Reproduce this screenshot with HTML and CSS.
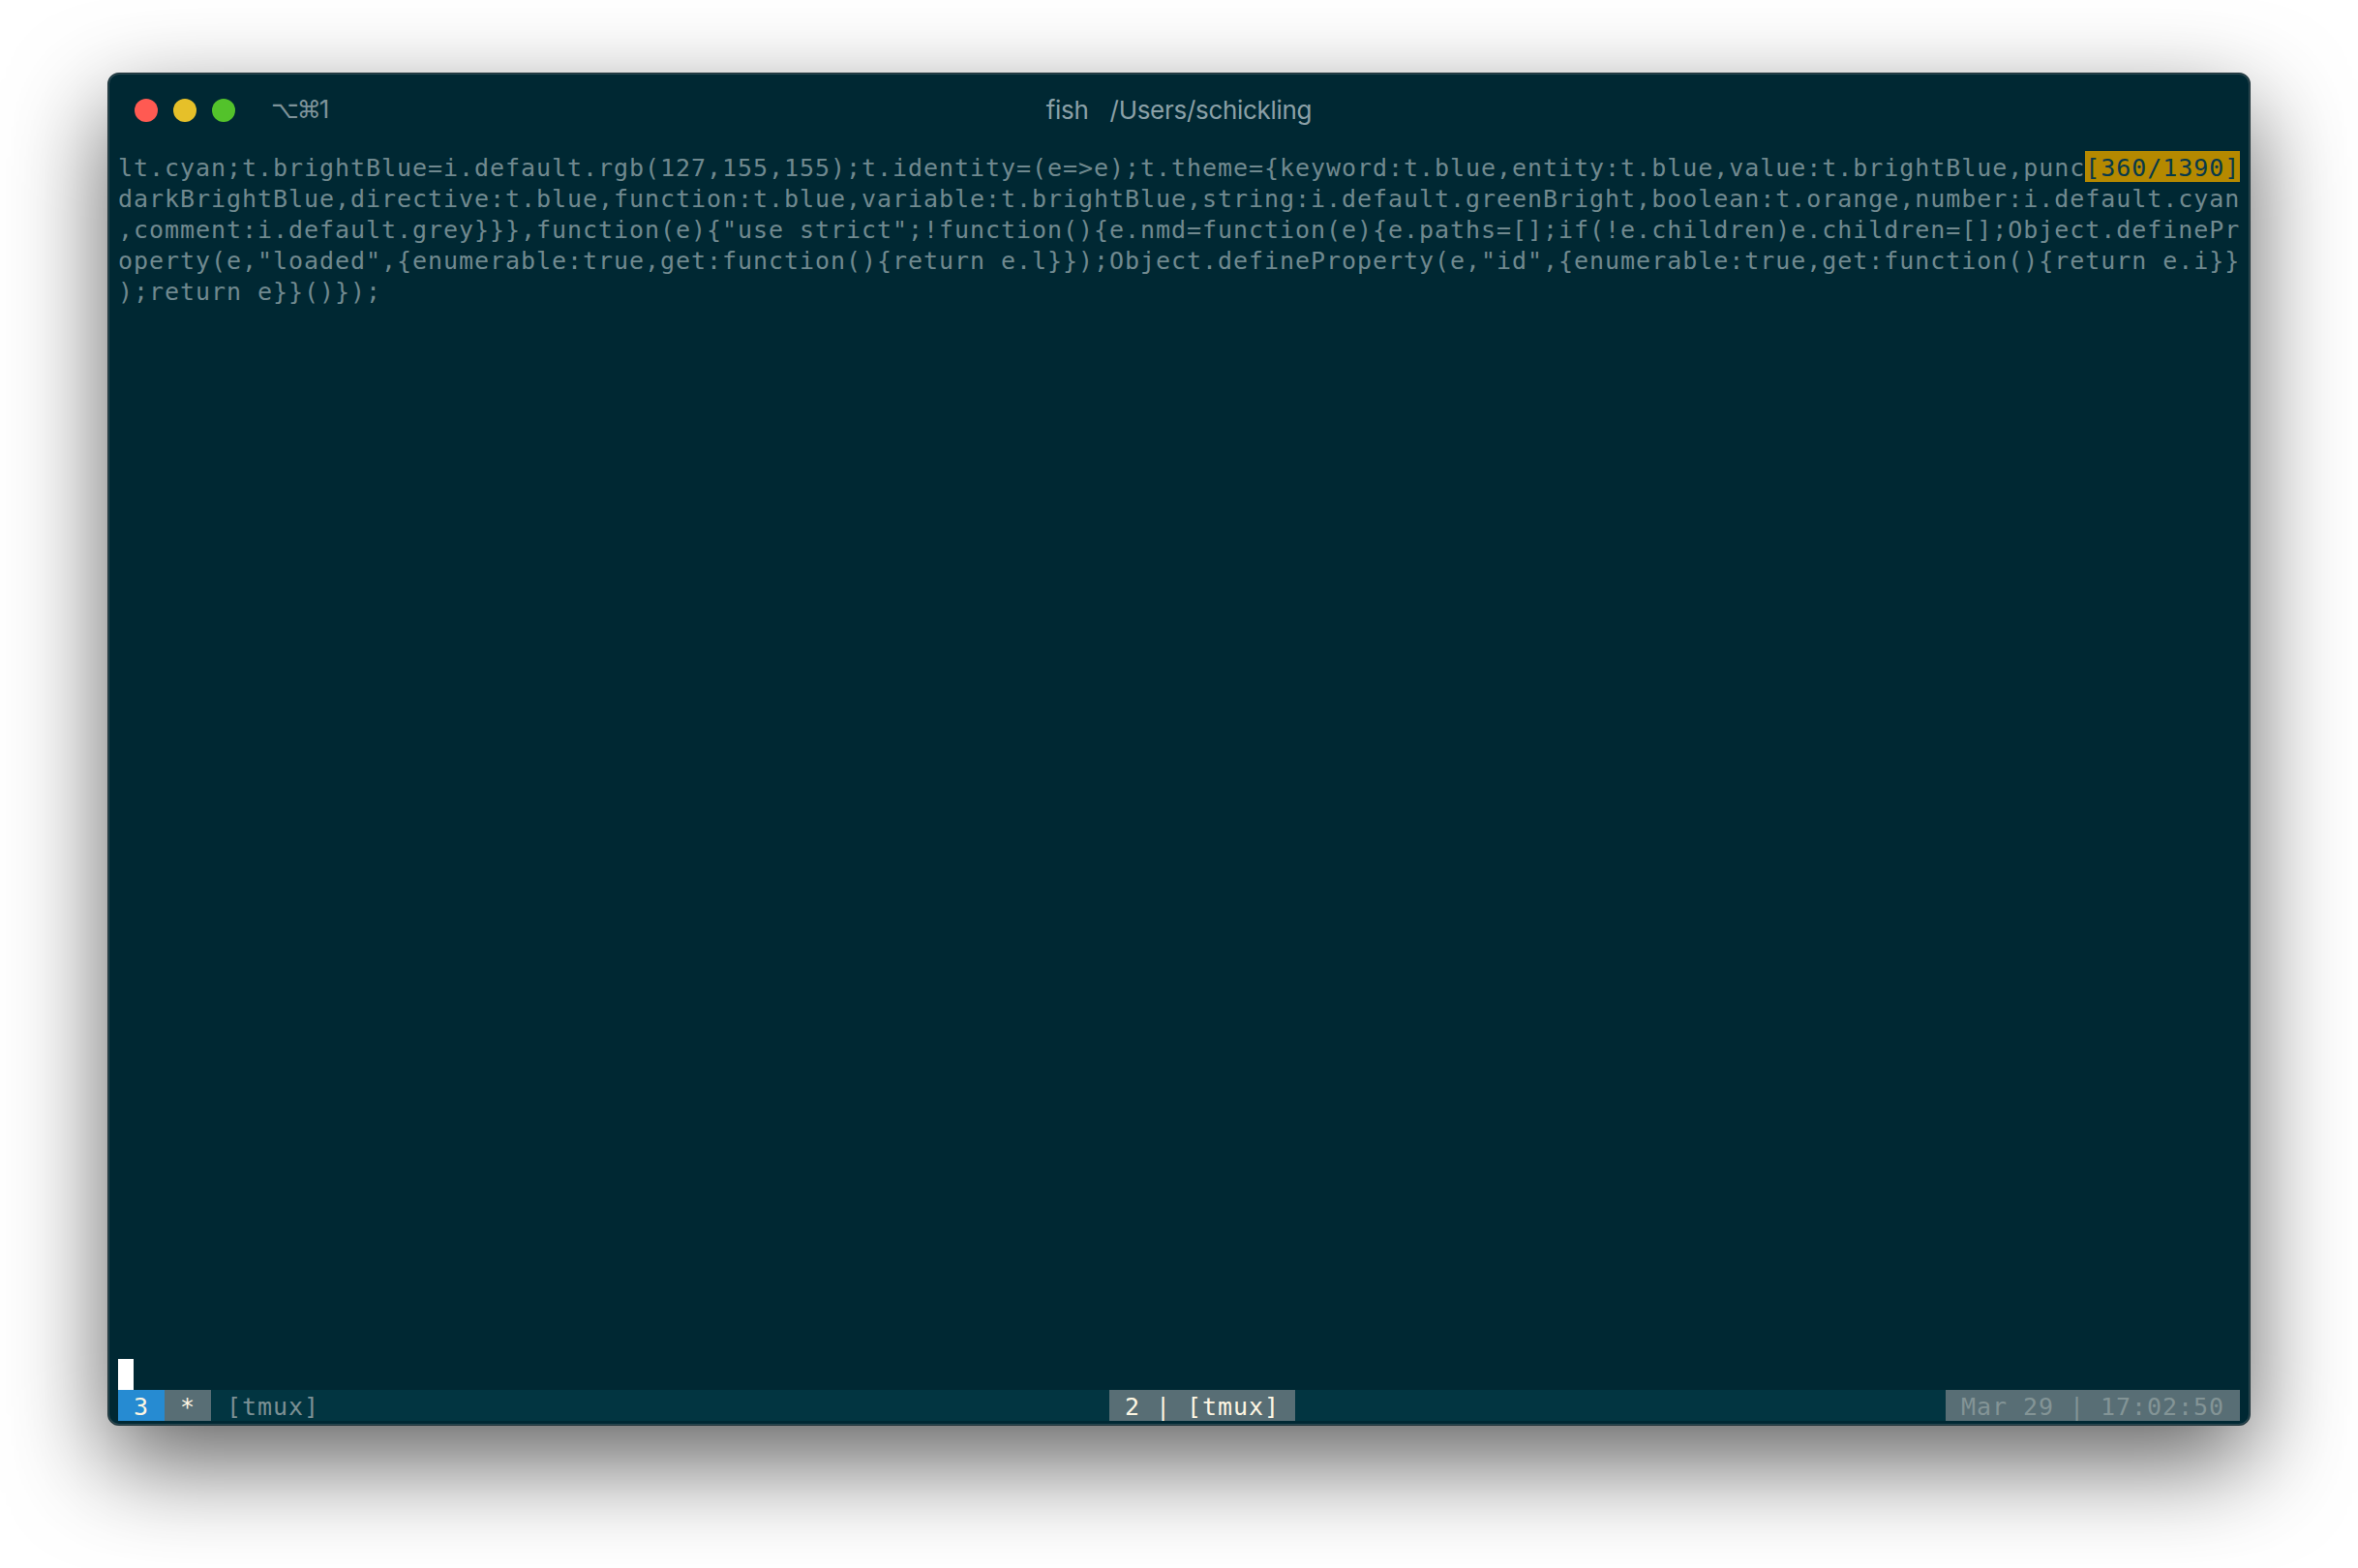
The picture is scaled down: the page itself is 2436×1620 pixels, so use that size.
FILE: index.html
```html
<!DOCTYPE html>
<html lang="en">
<head>
<meta charset="utf-8">
<title>fish /Users/schickling</title>
<link rel="stylesheet" href="styles.css">
</head>
<body>
<main class="window">
  <header class="titlebar">
    <div class="titlebar-left">
      <div class="lights">
        <span class="light light-red"></span>
        <span class="light light-yellow"></span>
        <span class="light light-green"></span>
      </div>
      <span class="shortcut"><span class="shortcut-keys">⌥⌘</span>1</span>
    </div>
    <div class="title"><span>fish</span><span>/Users/schickling</span></div>
  </header>
  <section class="terminal">
    <div class="lines">
      <div class="line-with-badge"><span class="line">lt.cyan;t.brightBlue=i.default.rgb(127,155,155);t.identity=(e=&gt;e);t.theme={keyword:t.blue,entity:t.blue,value:t.brightBlue,punc</span><span class="position">[360/1390]</span></div>
      <div class="line">darkBrightBlue,directive:t.blue,function:t.blue,variable:t.brightBlue,string:i.default.greenBright,boolean:t.orange,number:i.default.cyan</div>
      <div class="line">,comment:i.default.grey}}},function(e){"use strict";!function(){e.nmd=function(e){e.paths=[];if(!e.children)e.children=[];Object.definePr</div>
      <div class="line">operty(e,"loaded",{enumerable:true,get:function(){return e.l}});Object.defineProperty(e,"id",{enumerable:true,get:function(){return e.i}}</div>
      <div class="line">);return e}}()});</div>
    </div>
    <div class="cursor"></div>
    <footer class="status">
      <div class="status-left"><span class="tab-index">&nbsp;3&nbsp;</span><span class="tab-flag">&nbsp;*&nbsp;</span><span class="tab-name">&nbsp;[tmux]</span></div>
      <div class="status-center">&nbsp;2 | [tmux]&nbsp;</div>
      <div class="status-right"><span class="clock">&nbsp;Mar 29 | 17:02:50&nbsp;</span></div>
    </footer>
  </section>
</main>
</body>
</html>
```
FILE: styles.css
```css
* { box-sizing: border-box; }

html, body {
  margin: 0;
  background: #ffffff;
}

body {
  width: 2436px;
  height: 1620px;
  padding: 75px 111px 147px;
  overflow: hidden;
}

.window {
  width: 2214px;
  height: 1398px;
  display: flex;
  flex-direction: column;
  background: #002833;
  border: 2px solid #2c4a53;
  border-radius: 12px;
  outline: 1px solid rgba(0, 0, 0, 0.35);
  outline-offset: -1px;
  box-shadow: 0 38px 100px rgba(0, 0, 0, 0.62);
}

.titlebar {
  height: 79px;
  flex: none;
  display: grid;
  grid-template-columns: 1fr;
  align-items: center;
  position: relative;
  padding: 0 0 6px 26px;
}

.titlebar-left {
  display: flex;
  align-items: center;
  gap: 37px;
}

.lights {
  display: flex;
  gap: 16px;
}

.light {
  width: 24px;
  height: 24px;
  border-radius: 50%;
}

.light-red { background: #ff5a52; }
.light-yellow { background: #e6c029; }
.light-green { background: #53c22b; }

.shortcut {
  font-family: Inter, sans-serif;
  font-size: 26px;
  color: #7e939a;
  line-height: 32px;
}

.shortcut-keys {
  font-family: "DejaVu Sans", sans-serif;
  font-size: 25px;
  letter-spacing: -2px;
}

.title {
  position: absolute;
  left: 0;
  right: 0;
  top: 21px;
  display: flex;
  justify-content: center;
  gap: 22px;
  font-family: Inter, "Liberation Sans", sans-serif;
  font-size: 26px;
  line-height: 32px;
  color: #8ba0a7;
  letter-spacing: -0.3px;
}

.terminal {
  flex: 1;
  display: flex;
  flex-direction: column;
  padding: 0 9px 3px;
  font-family: "DejaVu Sans Mono", monospace;
  font-size: 25px;
  line-height: 35px;
  letter-spacing: 0.95px;
  color: #70898f;
}

.lines {
  flex: 1;
}

.line-with-badge {
  display: flex;
}

.line {
  height: 32px;
  white-space: pre;
}

.position {
  background: #b58900;
  color: #07394a;
  height: 32px;
}

.cursor {
  width: 16px;
  height: 32px;
  background: #ffffff;
}

.status {
  height: 32px;
  flex: none;
  display: grid;
  grid-template-columns: 1024px 192px 1fr;
  grid-template-rows: 32px;
  background: #023541;
  white-space: pre;
}

.status-left {
  display: flex;
}

.tab-index {
  background: #268bd2;
  color: #fdf6e3;
}

.tab-flag {
  background: #586e75;
  color: #fdf6e3;
}

.tab-name {
  color: #7b9094;
}

.status-center {
  background: #586e75;
  color: #fdf6e3;
}

.status-right {
  display: flex;
  justify-content: flex-end;
}

.clock {
  background: #586e75;
  color: #839496;
}
```
